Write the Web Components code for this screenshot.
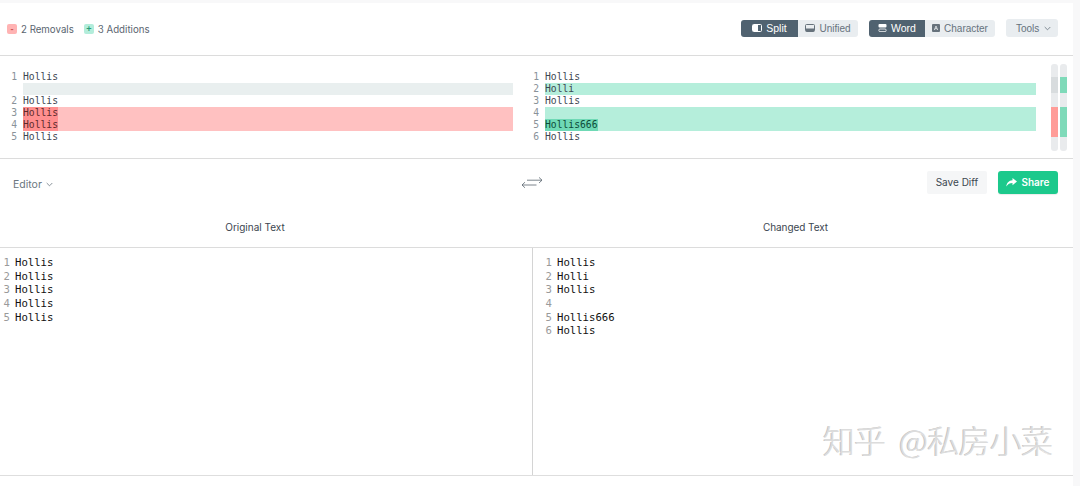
<!DOCTYPE html>
<html lang="en"><head><meta charset="utf-8"><title>Diff</title>
<style>
html,body{margin:0;padding:0;background:#f8f8f9;}
body{font-family:Inter,"Liberation Sans",sans-serif;width:1080px;height:486px;overflow:hidden;}
</style></head>
<body>
<diff-app></diff-app>
<script>
function el(name, css, html){
  customElements.define(name, class extends HTMLElement{
    connectedCallback(){
      if(this.shadowRoot) return;
      const r=this.attachShadow({mode:'open'});
      const g=(k,d)=>this.hasAttribute(k)?this.getAttribute(k):d;
      r.innerHTML='<style>'+css+'</style>'+(typeof html==='function'?html(g):html);
    }
  });
}
const ICON={
 split:'<svg width="10" height="8" viewBox="0 0 10 8"><rect x=".5" y=".5" width="9" height="7" rx="1" fill="none" stroke="currentColor"/><rect x="1" y="1" width="5" height="6" fill="currentColor"/></svg>',
 unified:'<svg width="10" height="8" viewBox="0 0 10 8"><rect x=".5" y=".5" width="9" height="7" rx="1" fill="none" stroke="currentColor"/><rect x="1" y="4.5" width="8" height="3" fill="currentColor"/></svg>',
 word:'<svg width="9" height="8" viewBox="0 0 9 8"><rect x=".5" y="0" width="8" height="3.4" rx="1" fill="currentColor"/><rect x=".9" y="5" width="7.2" height="2.6" rx="1" fill="none" stroke="currentColor" stroke-width=".8"/></svg>',
 char:'<svg width="8" height="8" viewBox="0 0 8 8"><rect width="8" height="8" rx="1" fill="currentColor"/><path d="M2.3 6 4 2l1.700 4M3 4.700h2" fill="none" stroke="#e9edf0" stroke-width=".8"/></svg>',
 chev:'<svg width="7" height="5" viewBox="0 0 7 5"><path d="M.7 1 3.500 3.800 6.300 1" fill="none" stroke="currentColor" stroke-width=".8"/></svg>',
 share:'<svg width="11" height="9" viewBox="0 0 11 9"><path d="M6.500 0 11 3.600 6.500 7.200V5C3.800 5 1.800 6 .3 8.600.6 5 2.800 2.400 6.500 2.200Z" fill="currentColor"/></svg>',
 swap:'<svg width="22" height="12" viewBox="0 0 22 12"><path d="M6 3.200H21M18 .4 21 3.200 18 6M1 8H15.500M4 5.200 1 8 4 10.800" fill="none" stroke="#5b6670" stroke-width=".8"/></svg>'
};

el('stat-badge',`:host{display:inline-flex;align-items:center;gap:4px;font-size:9.7px;color:#5a6570;}
 i{width:10px;height:10px;border-radius:2px;background:var(--bg);color:var(--fg);font:700 9px/10px "Liberation Sans",sans-serif;text-align:center;display:block;}`,
 g=>`<i>${g('sign','')}</i><span><slot></slot></span>`);

el('seg-btn',`:host{display:inline-flex;align-items:center;justify-content:center;gap:4px;box-sizing:border-box;height:17px;font:10px "Liberation Sans",sans-serif;background:#e9edf0;color:#66727c;}
 :host([on]){background:#506270;color:#fff;border-radius:3px 0 0 3px;font-size:10.5px;}
 :host(:not([on])){border-radius:0 3px 3px 0;}`,
 g=>`${ICON[g('icon','split')]}<span><slot></slot></span>`);

el('tools-btn',`:host{display:inline-flex;align-items:center;justify-content:flex-start;gap:5px;box-sizing:border-box;padding-left:10px;width:52px;height:18px;border-radius:3px;background:#e9edf0;color:#66727c;font:10px "Liberation Sans",sans-serif;}`,
 `<span><slot></slot></span>${ICON.chev}`);

el('top-bar',`:host{display:flex;align-items:center;box-sizing:border-box;height:53px;padding:0 15px 0 7px;background:#fff;border-bottom:1px solid #dcdcdc;}
 .l{display:flex;gap:10px;padding-top:0;} .r{margin-left:auto;display:flex;align-items:center;padding-bottom:2px;}
 .a{display:flex;margin-right:11px;} .c{margin-left:11px;}
 .red{--bg:#ffb3b3;--fg:#c55;} .grn{--bg:#b3eddb;--fg:#2a9d78;}`,
 `<div class="l"><stat-badge class="red" sign="-">2 Removals</stat-badge><stat-badge class="grn" sign="+">3 Additions</stat-badge></div>
  <div class="r">
   <div class="a"><seg-btn on icon="split" style="width:57px">Split</seg-btn><seg-btn icon="unified" style="width:60px">Unified</seg-btn></div>
   <div class="a" style="margin-right:0"><seg-btn on icon="word" style="width:56px">Word</seg-btn><seg-btn icon="char" style="width:70px">Character</seg-btn></div>
   <tools-btn class="c">Tools</tools-btn>
  </div>`);

el('diff-line',`:host{display:flex;height:12px;font:9.7px/12px "DejaVu Sans Mono",monospace;color:#3c4650;}
 .n{width:var(--gut);box-sizing:border-box;text-align:right;padding-right:6px;color:#8a9299;flex:none;}
 .t{flex:1;white-space:pre;background:var(--lb,transparent);border-radius:var(--rad,0);}
 b{font-weight:400;background:var(--wb,transparent);color:var(--wc,inherit);display:inline-block;height:12px;vertical-align:top;}
 :host([kind=del]){--lb:#ffc1c1;--wb:#ff8f8f;--wc:#5c2b2b;}
 :host([kind=add]){--lb:#b5eedb;--wb:#b5eedb;}
 :host([kind=addw]){--lb:#b5eedb;--wb:#6fd9b5;--wc:#0d4a38;}
 :host([kind=blank]){--lb:#e9efef;}`,
 g=>`<span class="n">${g('n','')}</span><span class="t"><b><slot></slot></b></span>`);

el('diff-pane',`:host{display:block;box-sizing:border-box;} `,`<slot></slot>`);

el('mini-map',`:host{display:flex;gap:2px;flex:none;}
 .b{display:flex;flex-direction:column;width:7px;}
 i{display:block;background:#e9ebed;} i:first-child{border-radius:3px 3px 0 0;} i:last-child{border-radius:0 0 3px 3px;}
 .g{background:#d8dcde;} .r{background:#ff9c98;} .a{background:#7fdab9;}`,
 `<div class="b"><i style="height:13px"></i><i class="g" style="height:16px"></i><i style="height:14px"></i><i class="r" style="height:30px"></i><i style="height:14px"></i></div>
  <div class="b"><i style="height:13px"></i><i class="a" style="height:16px"></i><i style="height:14px"></i><i class="a" style="height:30px"></i><i style="height:14px"></i></div>`);

el('diff-view',`:host{display:flex;box-sizing:border-box;height:103px;padding:15px 6px 0 0;background:#fff;border-bottom:1px solid #dcdcdc;}
 diff-pane{--gut:23px;width:513px;flex:none;} diff-pane.r{width:523px;--gut:32px;}
 mini-map{margin:-7px 0 0 15px;}`,
 `<diff-pane>
   <diff-line n="1">Hollis</diff-line><diff-line kind="blank" n=""></diff-line><diff-line n="2">Hollis</diff-line>
   <diff-line kind="del" n="3">Hollis</diff-line><diff-line kind="del" n="4">Hollis</diff-line><diff-line n="5">Hollis</diff-line>
  </diff-pane>
  <diff-pane class="r">
   <diff-line n="1">Hollis</diff-line><diff-line kind="add" n="2">Holli</diff-line><diff-line n="3">Hollis</diff-line>
   <diff-line kind="add" n="4"></diff-line><diff-line kind="addw" n="5">Hollis666</diff-line><diff-line n="6">Hollis</diff-line>
  </diff-pane>
  <mini-map></mini-map>`);

el('act-btn',`:host{display:inline-flex;align-items:center;justify-content:center;gap:4px;width:60px;height:23px;border-radius:2px;font-size:10px;background:#f5f6f7;color:#3c4650;}
 :host([primary]){background:#1cc98c;color:#fff;font-weight:600;border-radius:3px;box-shadow:0 1px 1px rgba(0,0,0,.08);}`,
 g=>`${g('icon','')?ICON[g('icon','')]:''}<span><slot></slot></span>`);

el('tool-bar',`:host{display:grid;grid-template-columns:1fr auto 1fr;align-items:center;box-sizing:border-box;height:48px;padding:0 15px 2px 13px;background:#fff;}
 .e{display:inline-flex;align-items:center;gap:4px;font-size:10.5px;color:#6b7680;padding-bottom:2px;}
 .s{display:flex;line-height:0;margin-left:-4px;margin-right:4px;padding-top:1px;} .r{display:flex;gap:11px;justify-content:flex-end;}`,
 `<div><span class="e">Editor ${ICON.chev}</span></div><div class="s">${ICON.swap}</div>
  <div class="r"><act-btn>Save Diff</act-btn><act-btn primary icon="share">Share</act-btn></div>`);

el('title-bar',`:host{display:grid;grid-template-columns:532px 1fr;box-sizing:border-box;height:41px;background:#fff;border-bottom:1px solid #dcdcdc;font-size:10px;color:#3c4650;}
 div{display:flex;align-items:center;justify-content:center;padding-bottom:1px;} .a{padding-right:22px;} .b{padding-right:14px;letter-spacing:-.06px;}`,
 `<div class="a">Original Text</div><div class="b">Changed Text</div>`);

el('edit-line',`:host{display:flex;height:13.65px;font:10.65px/13.65px "DejaVu Sans Mono",monospace;color:#111;}
 span{color:#9a9a9a;box-sizing:border-box;width:var(--g);padding-right:var(--p,5px);text-align:right;flex:none;}
 b{font-weight:400;white-space:pre;}`,
 g=>`<span>${g('n','')}</span><b><slot></slot></b>`);

el('edit-pane',`:host{display:block;box-sizing:border-box;padding-top:8px;height:227px;} `,`<slot></slot>`);

el('editor-area',`:host{display:grid;grid-template-columns:532px 1fr;box-sizing:border-box;height:228px;background:#fff;border-bottom:1px solid #dedede;}
 edit-pane{--g:15px;} edit-pane.r{--g:24px;border-left:1px solid #d4d4d4;}`,
 `<edit-pane>
   <edit-line n="1">Hollis</edit-line><edit-line n="2">Hollis</edit-line><edit-line n="3">Hollis</edit-line><edit-line n="4">Hollis</edit-line><edit-line n="5">Hollis</edit-line>
  </edit-pane>
  <edit-pane class="r">
   <edit-line n="1">Hollis</edit-line><edit-line n="2">Holli</edit-line><edit-line n="3">Hollis</edit-line><edit-line n="4"></edit-line><edit-line n="5">Hollis666</edit-line><edit-line n="6">Hollis</edit-line>
  </edit-pane>`);

el('water-mark',`:host{position:absolute;left:823px;top:419px;font:32px/40px "Noto Sans CJK SC",sans-serif;font-weight:300;letter-spacing:-.7px;word-spacing:7px;color:#dcdcdc;white-space:nowrap;text-shadow:1px 1px 0 #fff,-1px 0 0 #c4c4c4;}`,`<slot></slot>`);

el('diff-app',`:host{display:block;position:relative;width:1073px;padding-top:3px;height:483px;}
 .foot{height:10px;background:#fff;}`,
 `<top-bar></top-bar><diff-view></diff-view><tool-bar></tool-bar><title-bar></title-bar><editor-area></editor-area><div class="foot"></div>
  <water-mark>知乎 @私房小菜</water-mark>`);
</script>
</body></html>
